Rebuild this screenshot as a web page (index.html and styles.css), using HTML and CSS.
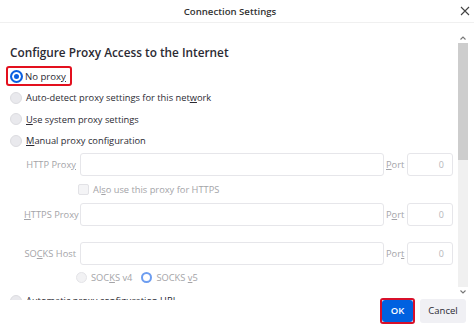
FILE: index.html
```html
<!DOCTYPE html>
<html>
<head>
<meta charset="utf-8">
<link rel="stylesheet" href="styles.css">
</head>
<body>
<div class="dialog">
  <header class="titlebar">
    <span class="title">Connection Settings</span>
    <span class="close">
      <svg width="10" height="10" viewBox="0 0 10 10"><path d="M1 1L9 9M9 1L1 9" stroke="#444" stroke-width="1.1" fill="none"/></svg>
    </span>
  </header>
  <div class="body">
    <div class="viewport">
      <div class="content">
        <h1 class="heading">Configure Proxy Access to the Internet</h1>
        <div class="options">
          <label class="opt highlight"><span class="radio on"></span><span>No prox<u>y</u></span></label>
          <label class="opt"><span class="radio"></span><span>Auto-detect proxy settings for this net<u>w</u>ork</span></label>
          <label class="opt"><span class="radio"></span><span><u>U</u>se system proxy settings</span></label>
          <label class="opt"><span class="radio"></span><span><u>M</u>anual proxy configuration</span></label>
        </div>
        <div class="fields">
          <div class="frow">
            <span class="flabel">HTTP Prox<u>y</u></span>
            <span class="input host"></span>
            <span class="plabel"><u>P</u>ort</span>
            <span class="input port">0</span>
          </div>
          <div class="checkrow">
            <span class="checkbox"></span><span class="dim">Al<u>s</u>o use this proxy for HTTPS</span>
          </div>
          <div class="frow">
            <span class="flabel"><u>H</u>TTPS Proxy</span>
            <span class="input host"></span>
            <span class="plabel">P<u>o</u>rt</span>
            <span class="input port">0</span>
          </div>
          <div class="frow socks">
            <span class="flabel">SO<u>C</u>KS Host</span>
            <span class="input host"></span>
            <span class="plabel">Por<u>t</u></span>
            <span class="input port">0</span>
          </div>
          <div class="versions">
            <span class="ver"><span class="radio small"></span><span class="dim">SOC<u>K</u>S v4</span></span>
            <span class="ver"><span class="radio small on dimon"></span><span class="dim">SOCKS <u>v</u>5</span></span>
          </div>
        </div>
        <div class="options last">
          <label class="opt"><span class="radio"></span><span>Automatic proxy configuration URL</span></label>
        </div>
      </div>
      <div class="scrollbar">
        <svg class="arrow" width="8" height="6" viewBox="0 0 8 6"><path d="M1.5 4.5L4 2L6.5 4.5" stroke="#777" stroke-width="1.1" fill="none"/></svg>
        <div class="track"><div class="thumb"></div></div>
        <svg class="arrow" width="8" height="6" viewBox="0 0 8 6"><path d="M1.5 1.5L4 4L6.5 1.5" stroke="#777" stroke-width="1.1" fill="none"/></svg>
      </div>
    </div>
    <footer class="footer">
      <span class="okwrap"><button class="btn ok">OK</button></span>
      <button class="btn cancel">Cancel</button>
    </footer>
  </div>
</div>
</body>
</html>
```
FILE: styles.css
```css
* { box-sizing: border-box; }
html, body { margin: 0; padding: 0; background: #fff; }
body {
  width: 474px;
  height: 325px;
  overflow: hidden;
  font-family: "Open Sans", "Noto Sans", sans-serif;
  font-size: 9.3px;
  color: #2b2a33;
}
u { text-decoration-thickness: 1px; text-underline-offset: 1px; }
span, label { white-space: nowrap; }
.dialog { display: flex; flex-direction: column; height: 325px; }
.titlebar {
  height: 23px;
  border-bottom: 1px solid #f0f0f0;
  display: flex;
  align-items: center;
  justify-content: center;
  position: relative;
}
.title { font-size: 9.6px; font-weight: 600; color: #333; margin-left: -14px; }
.close { position: absolute; right: 4px; top: 6px; width: 10px; height: 10px; display: flex; }
.body { flex: 1; display: flex; flex-direction: column; }
.viewport { height: 277px; display: flex; overflow: hidden; }
.content { flex: 1; padding: 21px 0 0 10px; }
.heading { margin: 0; font-size: 11.8px; font-weight: 600; color: #2b2a33; line-height: 16px; height: 16px; }
.options { display: flex; flex-direction: column; margin-top: 5px; }
.opt { display: flex; align-items: center; height: 21.7px; gap: 4px; color: #2b2a33; font-size: 9.3px; }
.opt.highlight {
  align-self: flex-start;
  margin-left: -4px;
  padding: 0 4px 0 2px;
  height: 20px;
  margin-top: 1px;
  margin-bottom: 0.7px;
  border: 2px solid #e3101e;
  border-radius: 3px;
  gap: 2px;
  font-size: 9.6px;
}
.radio {
  width: 12px; height: 12px; border-radius: 50%;
  background: #e9e9ed; border: 1px solid #dcdce0;
  flex: none;
}
.radio.on {
  background: #fff;
  border: 2px solid #0a5fe0;
  box-shadow: inset 0 0 0 2px #fff, inset 0 0 0 6px #0a5fe0;
  width: 13px; height: 13px;
}
.radio.small { width: 11px; height: 11px; background: #f2f2f4; border-color: #e4e4e8; }
.radio.small.dimon { border: 2px solid #6d9df0; box-shadow: inset 0 0 0 2px #fff; background: #fff; }
.fields { display: flex; flex-direction: column; margin-top: 1px; margin-left: 14px; }
.frow { display: flex; align-items: center; height: 23px; }
.flabel { width: 54px; text-align: right; color: #a4a4a8; padding-right: 2px; }
.input {
  height: 23px; border: 1px solid #e6e6ea; border-radius: 3px; background: #fff;
  display: flex; align-items: center; justify-content: flex-end;
  color: #b6b6ba; font-size: 9px; padding-right: 8px;
}
.host { width: 304px; margin-left: 2px; }
.plabel { width: 23px; padding-left: 2px; color: #a4a4a8; }
.port { width: 46px; }
.checkrow { display: flex; align-items: center; height: 27px; margin-left: 54px; gap: 4px; }
.checkbox { width: 11px; height: 11px; border: 1px solid #e2e2e6; background: #f4f4f6; border-radius: 2px; }
.dim { color: #a4a4a8; }
.socks { margin-top: 16px; }
.versions { display: flex; align-items: center; height: 26px; margin-left: 52px; gap: 9px; }
.ver { display: flex; align-items: center; gap: 4px; }
.options.last { margin-top: -1px; }
.scrollbar {
  width: 10px; margin-right: 6px; margin-top: 10px;
  display: flex; flex-direction: column; align-items: center;
  height: 264px;
}
.arrow { flex: none; margin: 2px 0; }
.track { flex: 1; width: 10px; background: #f0f0f0; }
.thumb { height: 117px; background: #cdcdcd; }
.footer { display: flex; justify-content: flex-end; align-items: center; gap: 5px; padding-right: 8px; height: 27px; margin-top: -3px; }
.okwrap { border: 2px solid #d8102a; border-radius: 3px; display: flex; }
.btn { font-family: inherit; font-size: 9.5px; border: none; border-radius: 3px; height: 22px; }
.ok { background: #0061e0; color: #fff; width: 31px; font-weight: 600; padding: 0; }
.cancel { background: #f0f0f4; color: #2b2a33; width: 46px; height: 24px; padding: 0; }
```
